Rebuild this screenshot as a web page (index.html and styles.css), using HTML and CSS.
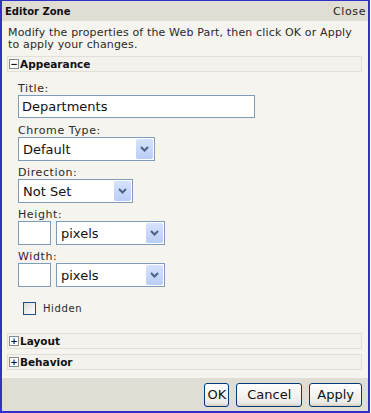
FILE: index.html
```html
<!DOCTYPE html>
<html lang="en">
<head>
    <meta charset="UTF-8">
    <title>Editor Zone</title>
    <link rel="stylesheet" href="styles.css">
</head>
<body>
    <div class="zone">
        <div class="zone-header">
            <span class="zone-title">Editor Zone</span>
            <a class="zone-close" href="#">Close</a>
        </div>
        <div class="zone-body">
            <p class="intro">Modify the properties of the Web Part, then click OK or Apply to apply your changes.</p>

            <div class="part-head">
                <span class="toggle">&minus;</span>Appearance
            </div>
            <div class="fields">
                <div class="field field-title">
                    <label for="title">Title:</label>
                    <input type="text" id="title" class="text wide" value="Departments">
                </div>
                <div class="field">
                    <label for="chrome">Chrome Type:</label>
                    <div class="select chrome">
                        <select id="chrome"><option>Default</option></select>
                        <span class="arrow"><svg width="9" height="6" viewBox="0 0 9 6"><path d="M1 1 L4.5 4.5 L8 1" fill="none" stroke="#4d6185" stroke-width="2"/></svg></span>
                    </div>
                </div>
                <div class="field">
                    <label for="direction">Direction:</label>
                    <div class="select direction">
                        <select id="direction"><option>Not Set</option></select>
                        <span class="arrow"><svg width="9" height="6" viewBox="0 0 9 6"><path d="M1 1 L4.5 4.5 L8 1" fill="none" stroke="#4d6185" stroke-width="2"/></svg></span>
                    </div>
                </div>
                <div class="field">
                    <label for="height">Height:</label>
                    <div class="pair">
                        <input type="text" id="height" class="text small">
                        <div class="select unit">
                            <select><option>pixels</option></select>
                            <span class="arrow"><svg width="9" height="6" viewBox="0 0 9 6"><path d="M1 1 L4.5 4.5 L8 1" fill="none" stroke="#4d6185" stroke-width="2"/></svg></span>
                        </div>
                    </div>
                </div>
                <div class="field">
                    <label for="width">Width:</label>
                    <div class="pair">
                        <input type="text" id="width" class="text small">
                        <div class="select unit">
                            <select><option>pixels</option></select>
                            <span class="arrow"><svg width="9" height="6" viewBox="0 0 9 6"><path d="M1 1 L4.5 4.5 L8 1" fill="none" stroke="#4d6185" stroke-width="2"/></svg></span>
                        </div>
                    </div>
                </div>
                <label class="check"><span class="box"></span>Hidden</label>
            </div>

            <div class="part-head closed">
                <span class="toggle">+</span>Layout
            </div>
            <div class="part-head closed">
                <span class="toggle">+</span>Behavior
            </div>
        </div>
        <div class="zone-footer">
            <button class="btn btn-ok">OK</button>
            <button class="btn">Cancel</button>
            <button class="btn btn-apply">Apply</button>
        </div>
    </div>
</body>
</html>
```

FILE: styles.css
```css
:root {
    --blue: #3131c9;
    --bar: #e0ddd5;
    --panel: #f5f4ef;
    --field-border: #7f9db9;
    --text: #222;
}
body {
    margin: 0;
    font-family: "DejaVu Sans", Verdana, sans-serif;
    color: var(--text);
}
.zone {
    width: 366px;
    height: 410px;
    border: 2px solid var(--blue);
    border-top-width: 1px;
    background: var(--panel);
    display: flex;
    flex-direction: column;
}
.zone-header {
    height: 20px;
    background: var(--bar);
    display: flex;
    align-items: center;
    justify-content: space-between;
    padding: 0 2px 0 3px;
    font-size: 10px;
}
.zone-title {
    font-weight: bold;
    color: #111;
}
.zone-close {
    color: #222;
    text-decoration: none;
    letter-spacing: 0.6px;
    font-size: 11px;
}
.zone-body {
    flex: 1;
    padding: 6px 5px 0 5px;
}
.intro {
    margin: 0 0 5px 1px;
    font-size: 11px;
    line-height: 12px;
    letter-spacing: 0.15px;
    color: #2a2a2a;
}
.part-head {
    height: 14px;
    border: 1px solid #e2dfd8;
    background: #f3f2ed;
    display: flex;
    align-items: center;
    font-size: 10.5px;
    font-weight: bold;
    color: #111;
    margin-right: 1px;
}
.part-head.closed {
    margin-top: 5px;
}
.toggle {
    width: 8px;
    height: 8px;
    border: 1px solid #8a8a8a;
    background: #fff;
    font-size: 9px;
    line-height: 8px;
    text-align: center;
    margin: 0 1px 0 1px;
    font-weight: bold;
}
.fields {
    padding: 10px 0 13px 11px;
}
.field {
    margin-bottom: 5px;
}
.field-title {
    margin-bottom: 6px;
}
.field label {
    display: block;
    height: 13px;
    font-size: 11px;
    line-height: 13px;
    letter-spacing: 0.6px;
    color: #2a2a2a;
}
.text {
    box-sizing: border-box;
    border: 1px solid var(--field-border);
    background: #fff;
    height: 23px;
    padding: 0 3px;
    font-family: "DejaVu Sans", Tahoma, sans-serif;
    font-size: 13px;
    color: #111;
    display: block;
}
.wide {
    width: 237px;
}
.small {
    width: 33px;
    height: 24px;
}
.pair {
    display: flex;
    gap: 5px;
}
.select {
    box-sizing: border-box;
    height: 24px;
    border: 1px solid var(--field-border);
    background: #fff;
    display: flex;
    align-items: stretch;
}
.select select {
    flex: 1;
    appearance: none;
    border: none;
    background: transparent;
    font-family: "DejaVu Sans", Tahoma, sans-serif;
    font-size: 13px;
    color: #111;
    padding: 0 4px;
    outline: none;
}
.arrow {
    width: 17px;
    margin: 1px;
    background: linear-gradient(#d6e3fd, #b9cdf6);
    border-radius: 2px;
    display: flex;
    align-items: center;
    justify-content: center;
}
.chrome { width: 137px; }
.direction { width: 115px; }
.unit { width: 109px; }
.check {
    display: flex;
    align-items: center;
    gap: 7px;
    margin: 15px 0 0 5px;
    font-size: 10px;
    letter-spacing: 0.6px;
    color: #2a2a2a;
}
.box {
    width: 11px;
    height: 11px;
    border: 1px solid #1c5180;
    background: linear-gradient(135deg, #dcdcd7, #fff);
}
.zone-footer {
    height: 33px;
    background: var(--bar);
    display: flex;
    align-items: center;
    justify-content: flex-end;
    gap: 7px;
    padding: 0 6px 0 0;
}
.btn {
    height: 24px;
    border: 1px solid #003c74;
    border-radius: 3px;
    background: linear-gradient(#fff, #ecebe6 85%, #d6d0c5);
    font-family: "DejaVu Sans", Tahoma, sans-serif;
    font-size: 13px;
    color: #111;
    padding: 0 10px;
}
.btn-ok {
    padding: 0 2px;
}
.btn-apply {
    padding: 0 7px;
}
```
